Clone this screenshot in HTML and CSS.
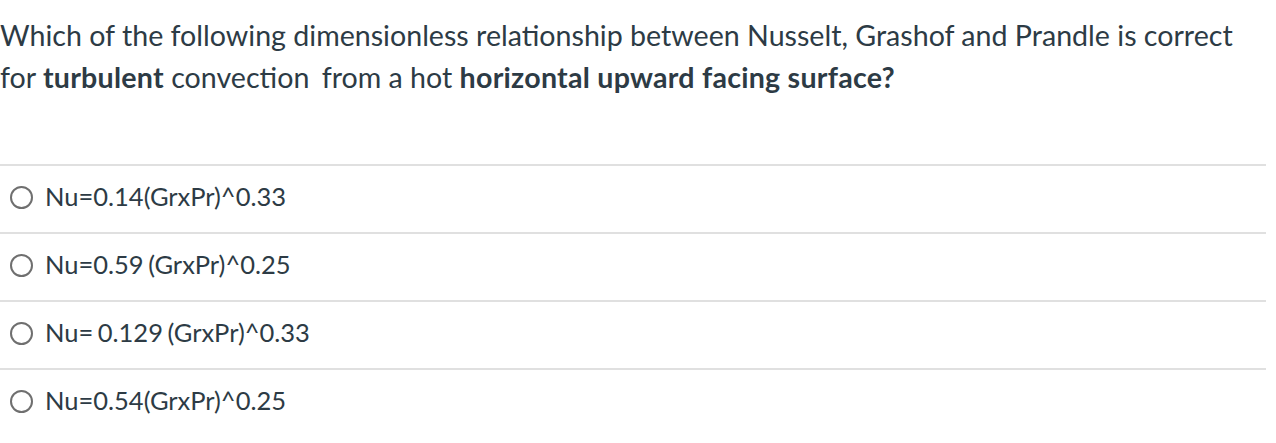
FILE: index.html
```html
<!DOCTYPE html>
<html>
<head>
<meta charset="utf-8">
<link rel="stylesheet" href="styles.css">
</head>
<body>
<div class="question">
  <div class="question-text">Which of the following dimensionless relationship between Nusselt, Grashof and Prandle is correct for <strong>turbulent</strong> convection<span class="gap"> </span>from a hot <strong>horizontal upward facing surface?</strong></div>
  <div class="answers">
    <label class="answer"><span class="radio"></span><span class="answer-text">Nu=0.14(GrxPr)^0.33</span></label>
    <label class="answer"><span class="radio"></span><span class="answer-text">Nu=0.59 (GrxPr)^0.25</span></label>
    <label class="answer"><span class="radio"></span><span class="answer-text">Nu= 0.129 (GrxPr)^0.33</span></label>
    <label class="answer"><span class="radio"></span><span class="answer-text">Nu=0.54(GrxPr)^0.25</span></label>
  </div>
</div>
</body>
</html>
```
FILE: styles.css
```css
html, body {
  margin: 0;
  padding: 0;
  background: #ffffff;
}
body {
  font-family: Lato, "Open Sans", sans-serif;
  color: #2d3b45;
}
.question {
  width: 1266px;
}
.question-text {
  font-size: 28.6px;
  line-height: 42px;
  padding-top: 14px;
  padding-right: 20px;
}
.question-text strong {
  font-weight: 700;
  letter-spacing: 0.25px;
}
.gap {
  word-spacing: 5px;
}
.answers {
  margin-top: 66px;
}
.answer {
  display: flex;
  align-items: center;
  gap: 12px;
  border-top: 2px solid #e0e0e0;
  padding-left: 10px;
  padding-bottom: 6px;
  box-sizing: border-box;
  height: 68px;
}
.radio {
  width: 19px;
  height: 19px;
  border: 2px solid #6f6f6f;
  border-radius: 50%;
  flex: none;
  margin-top: 3px;
}
.answer-text {
  font-size: 25.5px;
  line-height: 30px;
  word-spacing: -2px;
}
```
